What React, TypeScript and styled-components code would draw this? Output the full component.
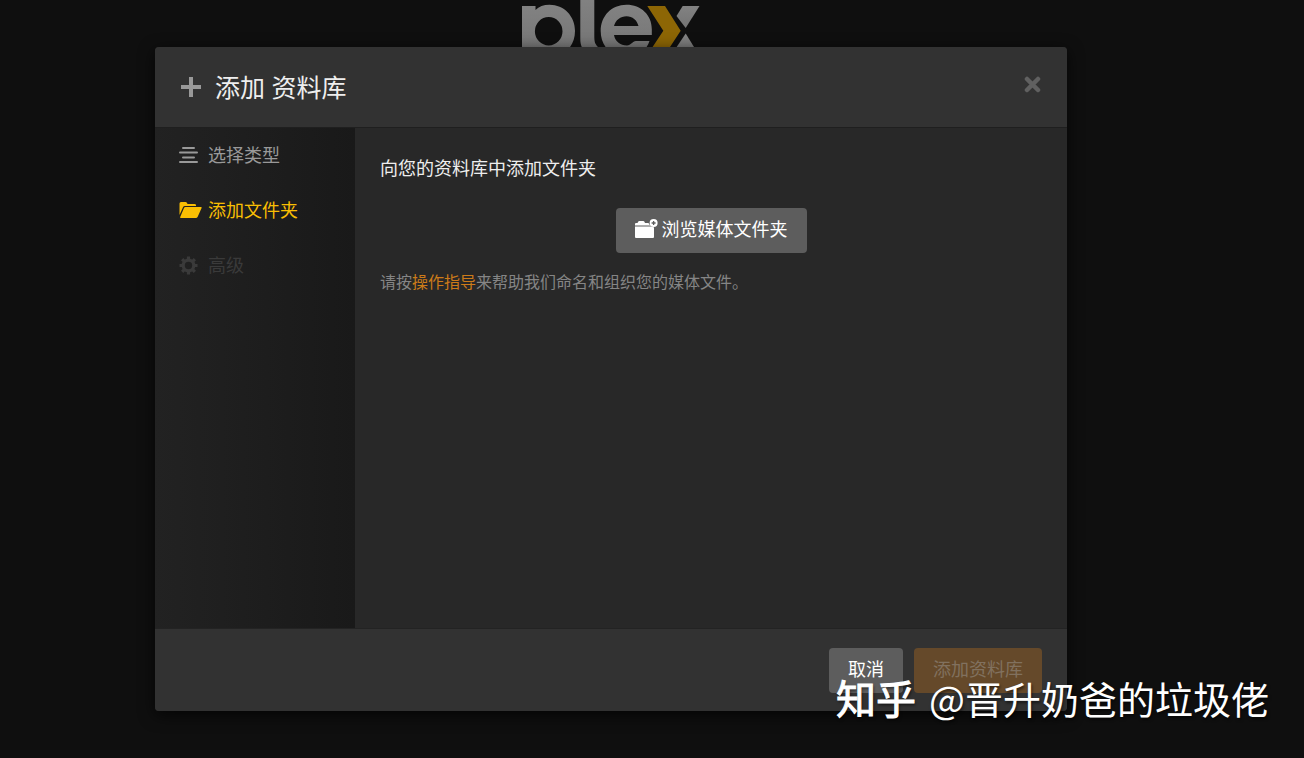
import React from 'react';
import styled, { createGlobalStyle, css } from 'styled-components';

const GlobalStyle = createGlobalStyle`
  *, *::before, *::after { box-sizing: border-box; }
  html, body, #root { min-height: 100vh; }
  body {
    margin: 0;
    overflow: hidden;
    background: #0f0f0f;
    color: #eee;
    font-family: "Open Sans", "Noto Sans CJK SC", sans-serif;
    font-size: 18px;
    line-height: 24px;
  }
  button { font: inherit; }
`;

const Page = styled.div`
  position: relative;
  display: flex;
  flex-direction: column;
  align-items: center;
  min-height: 100vh;
  padding: 0 237px 47px 155px;
`;

const Brand = styled.div`
  height: 47px;
  overflow: hidden;
  svg { display: block; }
`;

const Modal = styled.section`
  position: relative;
  display: flex;
  flex-direction: column;
  flex: 1;
  width: 100%;
  min-width: 640px;
  border-radius: 4px;
  background: #282828;
  box-shadow: 0 4px 16px rgba(0, 0, 0, 0.7);
`;

const Header = styled.header`
  display: flex;
  align-items: center;
  gap: 14px;
  height: 80px;
  padding: 0 26px;
  border-radius: 4px 4px 0 0;
  background: #323232;
  color: #999;
`;

const Title = styled.h1`
  flex: 1;
  margin: 0;
  color: #eee;
  font-size: 25px;
  font-weight: 400;
  line-height: 36px;
`;

const CloseButton = styled.button`
  display: flex;
  padding: 0 0 6px;
  border: 0;
  background: none;
  color: #606060;
  cursor: pointer;
`;

const Body = styled.div`
  display: flex;
  flex: 1;
  border-top: 1px solid #1f1f1f;
  border-bottom: 1px solid #232323;
`;

const Steps = styled.nav`
  display: flex;
  flex-direction: column;
  gap: 15px;
  width: 200px;
  padding-top: 7px;
  background: linear-gradient(to right, #222, #191919);
`;

type StepState = 'done' | 'active' | 'disabled';

const stepColors: Record<StepState, string> = {
  done: '#999',
  active: '#f9be03',
  disabled: '#3a3a3a',
};

const Step = styled.button<{ $state: StepState }>`
  display: flex;
  align-items: center;
  gap: 5px;
  height: 40px;
  padding: 0 24px;
  border: 0;
  background: none;
  color: ${({ $state }) => stepColors[$state]};
  text-align: left;
`;

const StepIcon = styled.span`
  display: flex;
  width: 24px;
`;

const Content = styled.div`
  flex: 1;
  padding: 28px 25px;
`;

const Prompt = styled.p`
  margin: 0 0 28px;
  color: #eee;
`;

const BrowseRow = styled.div`
  display: flex;
  justify-content: center;
  margin-bottom: 17px;
`;

const Help = styled.p`
  margin: 0;
  color: #858585;
  font-size: 16px;
`;

const HelpLink = styled.a`
  color: #cc7b19;
  text-decoration: none;
`;

const Footer = styled.footer`
  display: flex;
  justify-content: flex-end;
  gap: 11px;
  height: 82px;
  padding: 19px 25px;
  border-radius: 0 0 4px 4px;
  background: #323232;
`;

const Button = styled.button<{ $primary?: boolean }>`
  display: flex;
  align-items: center;
  gap: 4px;
  height: 45px;
  padding: 0 19px 3px;
  border: 0;
  border-radius: 4px;
  background: #5d5d5d;
  color: #fff;
  white-space: nowrap;
  ${({ $primary }) =>
    $primary &&
    css`
      background: #65492a;
      color: #81715f;
    `}
`;

const Watermark = styled.div`
  position: absolute;
  right: 35px;
  bottom: 36px;
  display: flex;
  align-items: baseline;
  gap: 13px;
  color: #fff;
  font-family: "Noto Sans CJK SC", sans-serif;
  font-size: 38px;
  line-height: 48px;
  text-shadow: 1px 2px 3px rgba(0, 0, 0, 0.6);
  white-space: nowrap;
  pointer-events: none;
`;

const WatermarkBrand = styled.span`
  font-size: 40px;
  -webkit-text-stroke: 1px #fff;
`;

const PlexLogo = () => (
  <svg width="178" height="60" viewBox="522 0 178 60" role="img" aria-label="plex">
    <defs>
      <linearGradient id="silver" x1="0" y1="0" x2="0" y2="1">
        <stop offset="0" stopColor="#828282" />
        <stop offset="1" stopColor="#747474" />
      </linearGradient>
    </defs>
    <g fill="url(#silver)">
      <path
        fillRule="evenodd"
        d="M522 6H535.5V10C539 6.500 543.500 4.700 549.500 4.700C564 4.700 575 16 575 31S564 57.500 549.500 57.500C544 57.500 539 55.500 536 52V60H522ZM548.700 17A13.800 14.200 0 1 0 548.700 45.400A13.800 14.200 0 1 0 548.700 17Z"
      />
      <path d="M580.300 -4H594.300V36C594.300 42 595 44 598 47L594 56C585 55 580.300 48 580.300 39Z" />
      <path
        fillRule="evenodd"
        d="M626.500 4.700C641 4.700 651.800 15 651.800 29V35H614C615 41 620 45.500 627 45.500C631 45.500 632.500 41 636 41H649.500C646 51 638 57.500 626.500 57.500C611.500 57.500 600.700 46 600.700 31S611.500 4.700 626.500 4.700ZM614 26H638.500C637 20 632.500 16.200 626.500 16.200S615.500 20 614 26Z"
      />
      <path d="M682.700 6H699.500L685.700 28L676.500 16Z" />
      <path d="M685.700 33.500L702 60H668Z" />
    </g>
    <path fill="#8d6605" d="M647.300 6H665L680.700 30.700L661.500 60H644L663.300 30.700Z" />
  </svg>
);

const PlusIcon = () => (
  <svg width="20" height="20" viewBox="0 0 20 20" fill="currentColor" aria-hidden="true">
    <path d="M8 0H12V8H20V12H12V20H8V12H0V8H8Z" />
  </svg>
);

const CloseIcon = () => (
  <svg width="17" height="17" viewBox="0 0 17 17" aria-hidden="true">
    <path d="M3 3L14 14M14 3L3 14" stroke="currentColor" strokeWidth="4.500" strokeLinecap="round" />
  </svg>
);

const LinesIcon = () => (
  <svg width="19" height="16" viewBox="0 0 19 16" aria-hidden="true">
    <path
      d="M4 1H15M1 5.500H18M4 10.500H15M1 15H18"
      stroke="currentColor"
      strokeWidth="2"
      strokeLinecap="round"
    />
  </svg>
);

const OpenFolderIcon = () => (
  <svg width="23" height="16" viewBox="0 0 23 16" fill="currentColor" aria-hidden="true">
    <path d="M0.500 13V1.500Q0.500 0 2 0H6.500Q7.500 0 8 1L8.500 2H15.500Q17 2 17 3.300V4H6Q4.500 4 4 5.200Z" />
    <path d="M6.300 5H22Q23 5 22.600 6L18.800 14.500Q18.200 16 16.800 16H1.800Q0.800 16 1.200 15L5 6Q5.400 5 6.300 5Z" />
  </svg>
);

const GearIcon = () => (
  <svg width="19" height="19" viewBox="0 0 19 19" fill="none" stroke="currentColor" aria-hidden="true">
    <circle cx="9.500" cy="9.500" r="5.300" strokeWidth="3.200" />
    {[0, 45, 90, 135].map((angle) => (
      <path
        key={angle}
        d="M9.500 0.500V3.500M9.500 15.500V18.500"
        strokeWidth="3.200"
        transform={`rotate(${angle} 9.500 9.500)`}
      />
    ))}
  </svg>
);

const AddFolderIcon = () => (
  <svg width="23" height="20" viewBox="0 0 23 20" fill="currentColor" aria-hidden="true">
    <path d="M0 6.500V5Q0 4 1 4H2.500L3.300 2.500Q3.600 2 4.200 2H8.300Q9 2 9.300 2.500L10 4H13.500Q14.200 5.800 15.500 6.500Z" />
    <path d="M0 7.500H16Q17.300 8.300 19 8.300V18Q19 19 18 19H1Q0 19 0 18Z" />
    <circle cx="18.600" cy="4" r="4" />
    <path d="M18.600 2V6M16.600 4H20.600" stroke="#5d5d5d" strokeWidth="1.300" />
  </svg>
);

const steps: { label: string; state: StepState; Icon: React.FC }[] = [
  { label: '选择类型', state: 'done', Icon: LinesIcon },
  { label: '添加文件夹', state: 'active', Icon: OpenFolderIcon },
  { label: '高级', state: 'disabled', Icon: GearIcon },
];

export default function App() {
  return (
    <>
      <GlobalStyle />
      <Page lang="zh-CN">
        <Brand>
          <PlexLogo />
        </Brand>
        <Modal role="dialog" aria-labelledby="dialog-title">
          <Header>
            <PlusIcon />
            <Title id="dialog-title">添加 资料库</Title>
            <CloseButton type="button" aria-label="关闭">
              <CloseIcon />
            </CloseButton>
          </Header>
          <Body>
            <Steps>
              {steps.map(({ label, state, Icon }) => (
                <Step
                  key={label}
                  type="button"
                  $state={state}
                  disabled={state === 'disabled'}
                  aria-current={state === 'active' ? 'step' : undefined}
                >
                  <StepIcon>
                    <Icon />
                  </StepIcon>
                  {label}
                </Step>
              ))}
            </Steps>
            <Content>
              <Prompt>向您的资料库中添加文件夹</Prompt>
              <BrowseRow>
                <Button type="button">
                  <AddFolderIcon />
                  浏览媒体文件夹
                </Button>
              </BrowseRow>
              <Help>
                请按<HelpLink href="#guide">操作指导</HelpLink>来帮助我们命名和组织您的媒体文件。
              </Help>
            </Content>
          </Body>
          <Footer>
            <Button type="button">取消</Button>
            <Button type="button" $primary disabled>
              添加资料库
            </Button>
          </Footer>
        </Modal>
        <Watermark>
          <WatermarkBrand>知乎</WatermarkBrand>
          <span>@晋升奶爸的垃圾佬</span>
        </Watermark>
      </Page>
    </>
  );
}
